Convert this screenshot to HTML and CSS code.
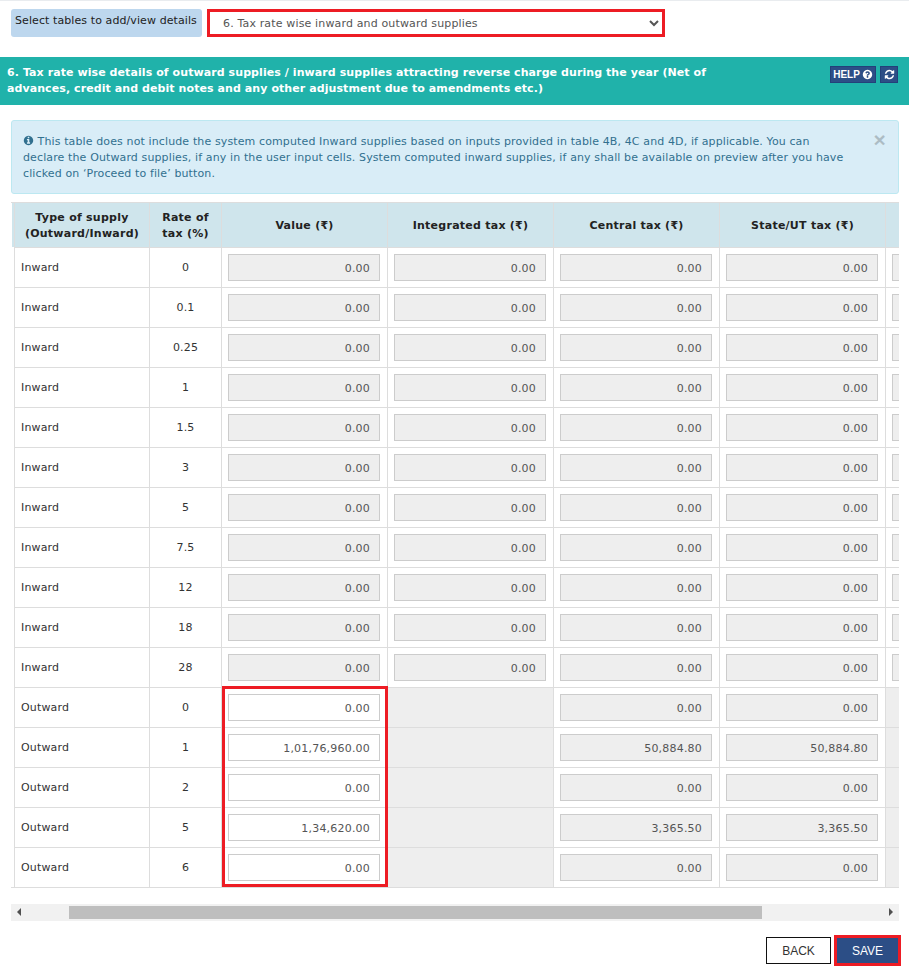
FILE: index.html
```html
<!DOCTYPE html>
<html lang="en">
<head>
<meta charset="utf-8">
<title>Tax rate wise inward and outward supplies</title>
<link rel="stylesheet" href="styles.css">
</head>
<body>
<div class="selector-row">
  <label class="selector-label" for="table-select">Select tables to add/view details</label>
  <select class="selector" id="table-select">
    <option>6. Tax rate wise inward and outward supplies</option>
  </select>
</div>

<div class="band">
  <h1 class="band-title">6. Tax rate wise details of outward supplies / inward supplies attracting reverse charge during the year (Net of advances, credit and debit notes and any other adjustment due to amendments etc.)</h1>
  <div class="band-actions">
    <button class="mini-btn">HELP <svg class="ico-q" viewBox="0 0 1792 1792"><path fill="currentColor" d="M1024 1376v-192q0-14-9-23t-23-9h-192q-14 0-23 9t-9 23v192q0 14 9 23t23 9h192q14 0 23-9t9-23zm256-672q0-88-55.500-163t-138.500-116-170-41q-243 0-371 213-15 24 8 42l132 100q7 6 19 6 16 0 25-12 53-68 86-92 34-24 86-24 48 0 85.500 26t37.500 59q0 38-20 61t-68 45q-63 28-115.500 86.500t-52.500 125.500v36q0 14 9 23t23 9h192q14 0 23-9t9-23q0-19 21.500-49.500t54.500-49.500q32-18 49-28.500t46-35 44.500-48 28-60.500 12.500-81zm384 192q0 209-103 385.500t-279.500 279.500-385.500 103-385.500-103-279.500-279.500-103-385.500 103-385.500 279.500-279.500 385.500-103 385.500 103 279.500 279.500 103 385.500z"/></svg></button>
    <button class="mini-btn mini-icon" aria-label="Refresh"><svg class="ico-r" viewBox="0 0 1792 1792"><path fill="currentColor" d="M1639 1056q0 5-1 7-64 268-268 434.500t-478 166.500q-146 0-282.500-55t-243.500-157l-129 129q-19 19-45 19t-45-19-19-45v-448q0-26 19-45t45-19h448q26 0 45 19t19 45-19 45l-137 137q71 66 161 102t187 36q134 0 250-65t186-179q11-17 53-117 8-23 30-23h192q13 0 22.500 9.500t9.500 22.500zm25-800v448q0 26-19 45t-45 19h-448q-26 0-45-19t-19-45 19-45l138-138q-148-137-349-137-134 0-250 65t-186 179q-11 17-53 117-8 23-30 23h-199q-13 0-22.500-9.500t-9.500-22.500v-7q65-268 270-434.500t480-166.500q146 0 284 55.500t245 156.500l130-129q19-19 45-19t45 19 19 45z"/></svg></button>
  </div>
</div>

<div class="alert">
  <svg class="ico-i" viewBox="0 0 1792 1792"><path fill="currentColor" d="M1152 1376v-160q0-14-9-23t-23-9h-96v-512q0-14-9-23t-23-9h-320q-14 0-23 9t-9 23v160q0 14 9 23t23 9h96v320h-96q-14 0-23 9t-9 23v160q0 14 9 23t23 9h448q14 0 23-9t9-23zm-128-896v-160q0-14-9-23t-23-9h-192q-14 0-23 9t-9 23v160q0 14 9 23t23 9h192q14 0 23-9t9-23zm640 416q0 209-103 385.500t-279.500 279.500-385.500 103-385.500-103-279.500-279.500-103-385.500 103-385.500 279.500-279.500 385.500-103 385.500 103 279.500 279.500 103 385.500z"/></svg>
  This table does not include the system computed Inward supplies based on inputs provided in table 4B, 4C and 4D, if applicable. You can declare the Outward supplies, if any in the user input cells. System computed inward supplies, if any shall be available on preview after you have clicked on ‘Proceed to file’ button.
  <span class="alert-close">×</span>
</div>

<div class="table-wrap">
  <table class="grid">
    <colgroup>
      <col class="c-type"><col class="c-rate"><col class="c-num"><col class="c-num"><col class="c-num"><col class="c-num"><col class="c-num">
    </colgroup>
    <thead>
      <tr>
        <th>Type of supply<br>(Outward/Inward)</th>
        <th>Rate of<br>tax (%)</th>
        <th>Value (₹)</th>
        <th>Integrated tax (₹)</th>
        <th>Central tax (₹)</th>
        <th>State/UT tax (₹)</th>
        <th aria-label="Cess (₹)"></th>
      </tr>
    </thead>
    <tbody>
      <tr><td>Inward</td><td class="rate">0</td><td><input class="num" readonly value="0.00"></td><td><input class="num" readonly value="0.00"></td><td><input class="num" readonly value="0.00"></td><td><input class="num" readonly value="0.00"></td><td><input class="num" readonly value="0.00"></td></tr>
      <tr><td>Inward</td><td class="rate">0.1</td><td><input class="num" readonly value="0.00"></td><td><input class="num" readonly value="0.00"></td><td><input class="num" readonly value="0.00"></td><td><input class="num" readonly value="0.00"></td><td><input class="num" readonly value="0.00"></td></tr>
      <tr><td>Inward</td><td class="rate">0.25</td><td><input class="num" readonly value="0.00"></td><td><input class="num" readonly value="0.00"></td><td><input class="num" readonly value="0.00"></td><td><input class="num" readonly value="0.00"></td><td><input class="num" readonly value="0.00"></td></tr>
      <tr><td>Inward</td><td class="rate">1</td><td><input class="num" readonly value="0.00"></td><td><input class="num" readonly value="0.00"></td><td><input class="num" readonly value="0.00"></td><td><input class="num" readonly value="0.00"></td><td><input class="num" readonly value="0.00"></td></tr>
      <tr><td>Inward</td><td class="rate">1.5</td><td><input class="num" readonly value="0.00"></td><td><input class="num" readonly value="0.00"></td><td><input class="num" readonly value="0.00"></td><td><input class="num" readonly value="0.00"></td><td><input class="num" readonly value="0.00"></td></tr>
      <tr><td>Inward</td><td class="rate">3</td><td><input class="num" readonly value="0.00"></td><td><input class="num" readonly value="0.00"></td><td><input class="num" readonly value="0.00"></td><td><input class="num" readonly value="0.00"></td><td><input class="num" readonly value="0.00"></td></tr>
      <tr><td>Inward</td><td class="rate">5</td><td><input class="num" readonly value="0.00"></td><td><input class="num" readonly value="0.00"></td><td><input class="num" readonly value="0.00"></td><td><input class="num" readonly value="0.00"></td><td><input class="num" readonly value="0.00"></td></tr>
      <tr><td>Inward</td><td class="rate">7.5</td><td><input class="num" readonly value="0.00"></td><td><input class="num" readonly value="0.00"></td><td><input class="num" readonly value="0.00"></td><td><input class="num" readonly value="0.00"></td><td><input class="num" readonly value="0.00"></td></tr>
      <tr><td>Inward</td><td class="rate">12</td><td><input class="num" readonly value="0.00"></td><td><input class="num" readonly value="0.00"></td><td><input class="num" readonly value="0.00"></td><td><input class="num" readonly value="0.00"></td><td><input class="num" readonly value="0.00"></td></tr>
      <tr><td>Inward</td><td class="rate">18</td><td><input class="num" readonly value="0.00"></td><td><input class="num" readonly value="0.00"></td><td><input class="num" readonly value="0.00"></td><td><input class="num" readonly value="0.00"></td><td><input class="num" readonly value="0.00"></td></tr>
      <tr><td>Inward</td><td class="rate">28</td><td><input class="num" readonly value="0.00"></td><td><input class="num" readonly value="0.00"></td><td><input class="num" readonly value="0.00"></td><td><input class="num" readonly value="0.00"></td><td><input class="num" readonly value="0.00"></td></tr>
      <tr><td>Outward</td><td class="rate">0</td><td><input class="num edit" value="0.00"></td><td class="off"></td><td><input class="num" readonly value="0.00"></td><td><input class="num" readonly value="0.00"></td><td class="off"></td></tr>
      <tr><td>Outward</td><td class="rate">1</td><td><input class="num edit" value="1,01,76,960.00"></td><td class="off"></td><td><input class="num" readonly value="50,884.80"></td><td><input class="num" readonly value="50,884.80"></td><td class="off"></td></tr>
      <tr><td>Outward</td><td class="rate">2</td><td><input class="num edit" value="0.00"></td><td class="off"></td><td><input class="num" readonly value="0.00"></td><td><input class="num" readonly value="0.00"></td><td class="off"></td></tr>
      <tr><td>Outward</td><td class="rate">5</td><td><input class="num edit" value="1,34,620.00"></td><td class="off"></td><td><input class="num" readonly value="3,365.50"></td><td><input class="num" readonly value="3,365.50"></td><td class="off"></td></tr>
      <tr><td>Outward</td><td class="rate">6</td><td><input class="num edit" value="0.00"></td><td class="off"></td><td><input class="num" readonly value="0.00"></td><td><input class="num" readonly value="0.00"></td><td class="off"></td></tr>
    </tbody>
  </table>
  <div class="value-highlight"></div>
</div>

<div class="scrollbar">
  <span class="arrow arrow-left"></span>
  <div class="track"><div class="thumb"></div></div>
  <span class="arrow arrow-right"></span>
</div>

<div class="footer">
  <button class="btn btn-back">BACK</button>
  <button class="btn btn-save">SAVE</button>
</div>
</body>
</html>
```
FILE: styles.css
```css
* { box-sizing: border-box; }
html, body { margin: 0; padding: 0; }
body {
  width: 909px;
  height: 975px;
  overflow: hidden;
  background: #fff;
  font-family: "DejaVu Sans", Verdana, sans-serif;
  font-size: 11px;
  letter-spacing: .15px;
  color: #333;
  border-top: 1px solid #e9ecef;
}
.selector-row {
  display: flex;
  align-items: flex-start;
  gap: 5px;
  height: 56px;
  padding: 8px 0 0 11px;
}
.selector-label {
  width: 191px;
  height: 28px;
  padding: 4px 4px;
  background: #bdd7ee;
  border-radius: 3px;
  color: #222;
  letter-spacing: .09px;
  line-height: 16px;
  white-space: nowrap;
}
.selector {
  width: 458px;
  height: 28px;
  border: 3px solid #ed1c24;
  background: #fff;
  color: #555;
  font: 11px "DejaVu Sans", sans-serif;
  letter-spacing: .15px;
  padding: 0 9px;
}
.band {
  display: flex;
  justify-content: space-between;
  height: 48px;
  padding: 8px 11px 0 7px;
  background: #20b2aa;
}
.band-title {
  margin: 0;
  width: 750px;
  color: #fff;
  font-size: 11px;
  font-weight: bold;
  letter-spacing: .08px;
  line-height: 16px;
}
.band-actions { display: flex; gap: 4px; padding-top: 1px; }
.mini-btn {
  display: flex;
  align-items: center;
  justify-content: center;
  gap: 2px;
  width: 46px;
  height: 17px;
  padding: 0;
  background: #2c4e86;
  border: 1px solid #23407a;
  color: #fff;
  font: bold 10px "Liberation Sans", Arial, sans-serif;
}
.mini-icon { width: 18px; }
.ico-q { width: 11px; height: 11px; }
.ico-r { width: 11px; height: 11px; }
.alert {
  position: relative;
  width: 888px;
  height: 74px;
  margin: 15px 0 8px 11px;
  padding: 13px 48px 0 11px;
  background: #d9edf7;
  border: 1px solid #bce8f1;
  border-radius: 3px;
  color: #31708f;
  letter-spacing: .12px;
  line-height: 16px;
}
.ico-i { width: 11px; height: 11px; vertical-align: -1px; }
.alert-close {
  position: absolute;
  top: 7px;
  right: 12px;
  font: bold 21px/24px "Liberation Sans", Arial, sans-serif;
  color: #000;
  opacity: .2;
}
.table-wrap {
  position: relative;
  width: 888px;
  margin-left: 11px;
  padding-left: 3px;
  overflow: hidden;
  border-top: 1px solid #ddd;
  border-bottom: 1px solid #ddd;
}
.grid {
  width: 1037px;
  table-layout: fixed;
  border-collapse: collapse;
  color: #333;
}
.c-type { width: 135px; }
.c-rate { width: 72px; }
.c-num { width: 166px; }
.grid th, .grid td {
  border: 1px solid #ddd;
  padding: 0;
}
.grid tr:first-child th, .grid tr:first-child td { border-top: 0; }
.grid tbody tr:last-child td { border-bottom: 0; }
.grid th {
  height: 44px;
  padding-top: 2px;
  background: #cfe5ec;
  color: #222;
  font-weight: bold;
  letter-spacing: .25px;
  line-height: 16px;
  text-align: center;
}
.grid th:first-child { box-shadow: -3px 0 0 #cfe5ec; }
.grid td {
  height: 40px;
  padding: 0 6px;
  vertical-align: middle;
}
.grid td:first-child { padding-left: 6px; }
.grid td.rate { text-align: center; }
.num {
  display: block;
  width: 152px;
  height: 27px;
  padding: 2px 9px 0 4px;
  background: #eee;
  border: 1px solid #ccc;
  border-radius: 0;
  color: #555;
  font: 11px "DejaVu Sans", sans-serif;
  letter-spacing: .2px;
  text-align: right;
  outline: 0;
}
.num.edit { background: #fff; }
.off { background: #eee; }
.value-highlight {
  position: absolute;
  left: 211px;
  bottom: 0;
  width: 166px;
  height: 201px;
  border: 3px solid #ed1c24;
  pointer-events: none;
}
.scrollbar {
  display: flex;
  align-items: center;
  width: 888px;
  height: 17px;
  margin: 16px 0 0 11px;
  background: #f1f1f1;
}
.arrow {
  flex: none;
  width: 17px;
  height: 17px;
  position: relative;
}
.arrow::after {
  content: "";
  position: absolute;
  top: 4px;
  border-top: 4px solid transparent;
  border-bottom: 4px solid transparent;
}
.arrow-left::after { left: 6px; border-right: 4px solid #505050; }
.arrow-right::after { right: 6px; border-left: 4px solid #505050; }
.track { flex: 1; height: 13px; padding-left: 41px; }
.thumb { width: 693px; height: 13px; background: #bebebe; }
.footer {
  display: flex;
  justify-content: flex-end;
  align-items: center;
  gap: 3px;
  margin-top: 14px;
  padding-right: 8px;
}
.btn {
  font: 12px "Liberation Sans", Arial, sans-serif;
  padding: 0;
}
.btn-back {
  width: 65px;
  height: 27px;
  background: #fff;
  border: 1px solid #111;
  color: #333;
}
.btn-save {
  width: 67px;
  height: 31px;
  background: #2c4e86;
  border: 3px solid #ed1c24;
  color: #fff;
}
```
